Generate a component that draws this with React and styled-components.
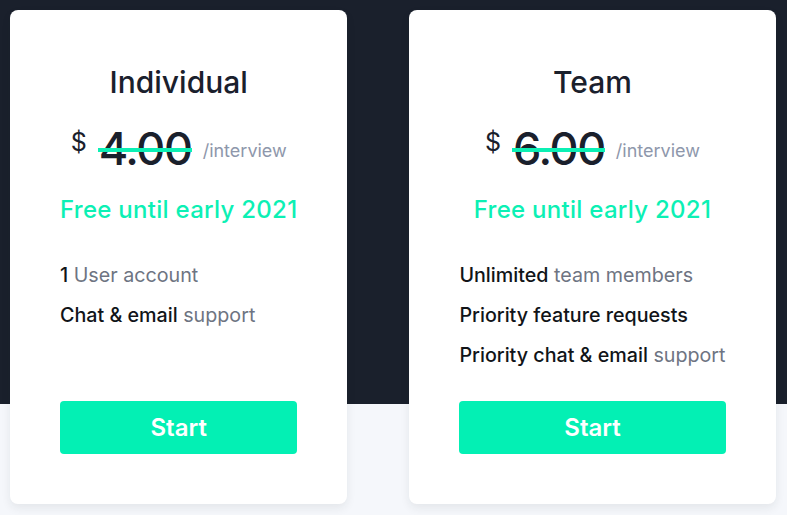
import React from "react";
import styled, { createGlobalStyle } from "styled-components";

const Global = createGlobalStyle`
  html, body { margin: 0; padding: 0; }
  body {
    font-family: Inter, "Noto Sans", sans-serif;
    -webkit-font-smoothing: antialiased;
  }
`;

const Page = styled.div`
  height: 515px;
  box-sizing: border-box;
  padding: 10px 0 0 10px;
  background: linear-gradient(to bottom, #1a202c 0, #1a202c 404px, #f5f7fb 404px);
`;

const Row = styled.div`
  display: flex;
  align-items: stretch;
  gap: 62px;
  height: 494px;
`;

const Card = styled.div`
  background: #fff;
  border-radius: 8px;
  box-shadow: 0 4px 10px rgba(26, 32, 44, 0.08);
  padding: 50px;
  display: flex;
  flex-direction: column;
  align-items: center;
  box-sizing: border-box;
`;

const Title = styled.h2`
  margin: 0;
  font-size: 30px;
  line-height: 45px;
  font-weight: 500;
  color: #1a202c;
`;

const PriceRow = styled.div`
  display: flex;
  align-items: center;
  margin-top: 19px;
  height: 50px;
  color: #1a202c;
`;

const Currency = styled.span`
  font-size: 25px;
  line-height: 1;
  align-self: flex-start;
  margin-top: 6px;
  margin-right: 12px;
`;

const Amount = styled.span`
  position: relative;
  font-size: 45px;
  line-height: 50px;
  font-weight: 500;
  letter-spacing: -1.4px;
  &::after {
    content: "";
    position: absolute;
    left: -1px;
    right: 0;
    top: 24px;
    height: 4px;
    background: #0cf0b4;
  }
`;

const Per = styled.span`
  font-size: 18px;
  color: #8e97ab;
  margin-left: 11px;
  margin-top: 2px;
`;

const Free = styled.div`
  margin-top: 18px;
  font-size: 24px;
  line-height: 36px;
  letter-spacing: 0.28px;
  color: #0cf0b4;
  font-weight: 500;
`;

const Features = styled.ul`
  list-style: none;
  margin: 32px 0 0;
  padding: 0;
  align-self: stretch;
  display: flex;
  flex-direction: column;
  gap: 10px;
`;

const Feature = styled.li`
  font-size: 19.7px;
  line-height: 30px;
  color: #6e7482;
  white-space: nowrap;
`;

const Strong = styled.span`
  color: #111418;
  font-weight: 500;
`;

const Button = styled.button`
  margin-top: auto;
  align-self: stretch;
  height: 53px;
  border: none;
  border-radius: 4px;
  background: #03f0b4;
  color: #fff;
  font-family: inherit;
  font-size: 24px;
  font-weight: 600;
  cursor: pointer;
`;

const plans = [
  {
    name: "Individual",
    price: "4.00",
    features: [
      [["1", true], [" User account", false]],
      [["Chat & email", true], [" support", false]],
    ],
  },
  {
    name: "Team",
    price: "6.00",
    features: [
      [["Unlimited", true], [" team members", false]],
      [["Priority feature requests", true]],
      [["Priority chat & email", true], [" support", false]],
    ],
  },
];

export default function App() {
  return (
    <>
      <Global />
      <Page>
        <Row>
          {plans.map((p) => (
            <Card key={p.name}>
              <Title>{p.name}</Title>
              <PriceRow>
                <Currency>$</Currency>
                <Amount>{p.price}</Amount>
                <Per>/interview</Per>
              </PriceRow>
              <Free>Free until early 2021</Free>
              <Features>
                {p.features.map((f, i) => (
                  <Feature key={i}>
                    {f.map(([t, b], j) =>
                      b ? <Strong key={j}>{t}</Strong> : <span key={j}>{t}</span>
                    )}
                  </Feature>
                ))}
              </Features>
              <Button>Start</Button>
            </Card>
          ))}
        </Row>
      </Page>
    </>
  );
}
